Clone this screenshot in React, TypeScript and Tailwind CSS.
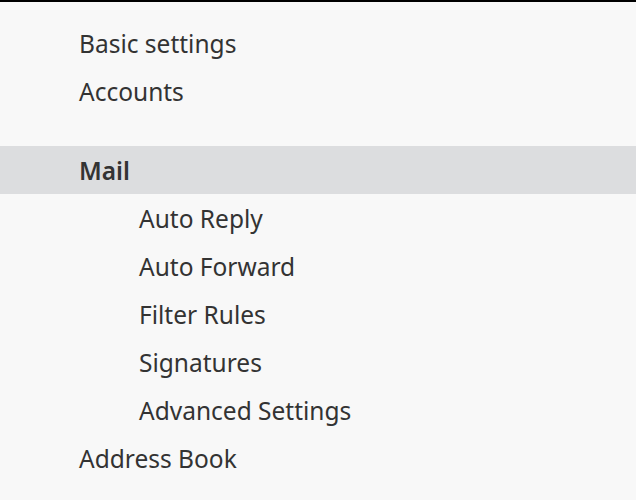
const TOP = ["Basic settings", "Accounts"];
const MAIL_ITEMS = ["Auto Reply", "Auto Forward", "Filter Rules", "Signatures", "Advanced Settings"];

export default function App() {
  return (
    <div
      className="h-[500px] w-[636px] overflow-hidden border-t-2 border-black bg-[#f8f8f8] text-[24.5px] text-[#333333]"
      style={{ fontFamily: '"Noto Sans", sans-serif' }}
    >
      <nav className="flex flex-col pt-[17px]">
        {TOP.map(label => (
          <div key={label} className="flex h-12 items-center pl-[79px] pt-[2px]">{label}</div>
        ))}
        <div className="mt-[31px] flex h-12 items-center bg-[#dcdddf] pl-[79px] pt-[2px] font-semibold">Mail</div>
        {MAIL_ITEMS.map(label => (
          <div key={label} className="flex h-12 items-center pl-[139px] pt-[2px]">{label}</div>
        ))}
        <div className="flex h-12 items-center pl-[79px] pt-[2px]">Address Book</div>
      </nav>
    </div>
  );
}
